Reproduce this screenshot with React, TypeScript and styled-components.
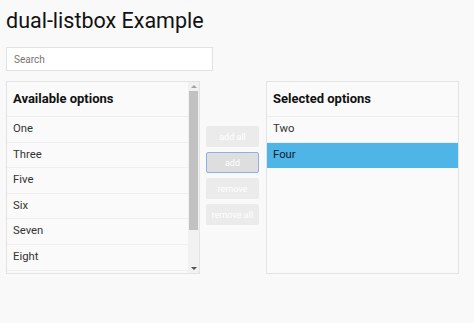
import React from "react";
import styled, { createGlobalStyle } from "styled-components";

const GlobalStyle = createGlobalStyle`
  body {
    margin: 0;
    background: #f9f9f9;
    font-family: Roboto, "Liberation Sans", sans-serif;
    color: #222;
  }
`;

const Page = styled.div`
  padding: 9px 6px;
`;

const Title = styled.h1`
  margin: 0;
  font-size: 21.5px;
  line-height: 24px;
  font-weight: 400;
  color: #111;
`;

const Search = styled.input`
  display: block;
  box-sizing: border-box;
  margin-top: 14px;
  width: 207px;
  height: 24px;
  padding: 0 7px;
  border: 1px solid #e2e2e2;
  background: #fff;
  font-family: inherit;
  font-size: 10px;
  outline: none;

  ::placeholder {
    color: #8a8a8a;
  }
`;

const Row = styled.div`
  display: flex;
  align-items: flex-start;
  margin-top: 10px;
`;

const Panel = styled.div<{ $width: number }>`
  box-sizing: border-box;
  display: flex;
  width: ${(p) => p.$width}px;
  height: 193px;
  border: 1px solid #e3e3e3;
  background: #fafafa;
  overflow: hidden;
`;

const List = styled.div`
  flex: 1;
  overflow: hidden;
`;

const Header = styled.div`
  height: 34px;
  line-height: 34px;
  padding-left: 6px;
  font-size: 13px;
  font-weight: 700;
  color: #111;
  border-bottom: 1px solid #ececec;
`;

const Item = styled.div<{ $selected?: boolean }>`
  height: 24.6px;
  line-height: 24.6px;
  padding-left: 6px;
  font-size: 11.3px;
  color: ${(p) => (p.$selected ? "#10202a" : "#333")};
  background: ${(p) => (p.$selected ? "#4fb4e6" : "transparent")};
  border-bottom: 1px solid ${(p) => (p.$selected ? "#4fb4e6" : "#efefef")};
`;

const Scrollbar = styled.div`
  display: flex;
  flex-direction: column;
  width: 11px;
  background: #f1f1f1;
`;

const Arrow = styled.div<{ $down?: boolean }>`
  height: 9px;
  display: flex;
  align-items: center;
  justify-content: center;

  &::before {
    content: "";
    border-left: 3px solid transparent;
    border-right: 3px solid transparent;
    ${(p) =>
      p.$down ? "border-top: 3px solid #505050;" : "border-bottom: 3px solid #a3a3a3;"}
  }
`;

const Track = styled.div`
  flex: 1;
  display: flex;
  flex-direction: column;
  padding: 0 1px;
`;

const Thumb = styled.div`
  height: 139px;
  background: #c1c1c1;
`;

const Controls = styled.div`
  display: flex;
  flex-direction: column;
  gap: 5px;
  width: 53px;
  margin: 45px 7px 0 6px;
`;

const Button = styled.button<{ $focus?: boolean }>`
  box-sizing: border-box;
  height: 21px;
  padding: 0;
  font-family: inherit;
  font-size: 9px;
  color: #fff;
  background: ${(p) => (p.$focus ? "#dedede" : "#ebebeb")};
  border: 1px solid ${(p) => (p.$focus ? "#8fb0e6" : "#ebebeb")};
  border-radius: 2px;
`;

const available = ["One", "Three", "Five", "Six", "Seven", "Eight"];
const selected = ["Two", "Four"];

export default function App() {
  return (
    <>
      <GlobalStyle />
      <Page>
        <Title>dual-listbox Example</Title>
        <Search placeholder="Search" />
        <Row>
          <Panel $width={194}>
            <List>
              <Header>Available options</Header>
              {available.map((o) => (
                <Item key={o}>{o}</Item>
              ))}
            </List>
            <Scrollbar>
              <Arrow />
              <Track>
                <Thumb />
              </Track>
              <Arrow $down />
            </Scrollbar>
          </Panel>
          <Controls>
            <Button>add all</Button>
            <Button $focus>add</Button>
            <Button>remove</Button>
            <Button>remove all</Button>
          </Controls>
          <Panel $width={193}>
            <List>
              <Header>Selected options</Header>
              {selected.map((o) => (
                <Item key={o} $selected={o === "Four"}>
                  {o}
                </Item>
              ))}
            </List>
          </Panel>
        </Row>
      </Page>
    </>
  );
}
